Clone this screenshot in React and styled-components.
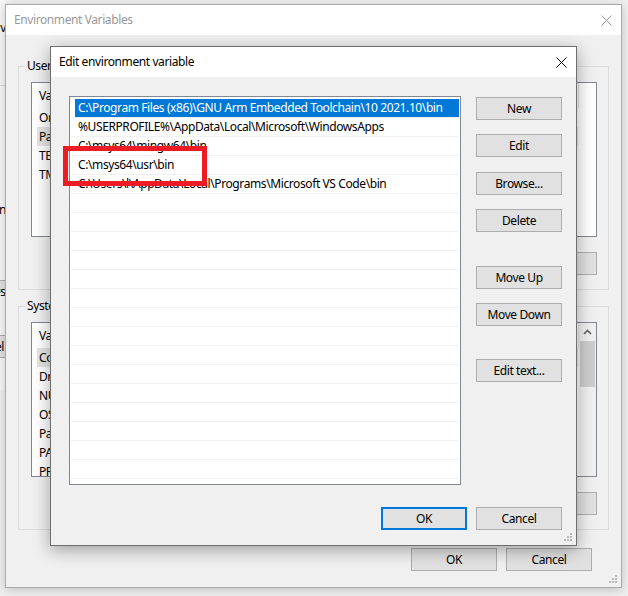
import styled, { createGlobalStyle } from "styled-components";

const GlobalStyle = createGlobalStyle`
  html, body {
    margin: 0;
    padding: 0;
  }
  body {
    background: #f0f0f0;
    font-family: "Segoe UI", "Noto Sans", "Liberation Sans", sans-serif;
    font-size: 12px;
    letter-spacing: -0.4px;
    color: #000;
  }
  * {
    box-sizing: border-box;
  }
`;

const Desktop = styled.div`
  position: relative;
  width: 628px;
  height: 596px;
  overflow: hidden;
  background: #f0f0f0;
`;

/* window peeking out on the far left */
const BackWindow = styled.div`
  position: absolute;
  left: -194px;
  top: -30px;
  width: 200px;
  height: 420px;
  background: #f7f7f7;
  display: flex;
  flex-direction: column;
  align-items: flex-end;
`;

const BackText = styled.div`
  margin-top: ${(p) => p.$top}px;
  line-height: 16px;
  white-space: nowrap;
`;

const BackRule = styled.div`
  align-self: stretch;
  height: 1px;
  background: #dcdcdc;
  margin-top: ${(p) => p.$top}px;
`;

const BackButton = styled.div`
  width: 120px;
  height: ${(p) => p.$h || 23}px;
  margin-top: ${(p) => p.$top}px;
  background: #e1e1e1;
  border: 1px solid #adadad;
  text-align: right;
  line-height: 21px;
  padding-right: 1px;
  white-space: nowrap;
`;

const Window = styled.div`
  position: absolute;
  left: ${(p) => p.$x}px;
  top: ${(p) => p.$y}px;
  width: ${(p) => p.$w}px;
  height: ${(p) => p.$h}px;
  background: #f0f0f0;
  border: 1px solid ${(p) => (p.$active ? "#6f6f6f" : "#aaaaaa")};
  box-shadow: ${(p) =>
    p.$active ? "0 4px 16px rgba(0, 0, 0, 0.34)" : "0 2px 10px rgba(0, 0, 0, 0.2)"};
  display: flex;
  flex-direction: column;
`;

const TitleBar = styled.div`
  height: 30px;
  flex-shrink: 0;
  background: #fff;
  display: flex;
  align-items: center;
  justify-content: space-between;
  padding-left: 8px;
  color: ${(p) => (p.$inactive ? "#999999" : "#000")};
`;

const TitleText = styled.span`
  font-size: 12px;
  line-height: 16px;
`;

const CloseBox = styled.div`
  width: 30px;
  height: 30px;
  display: flex;
  align-items: center;
  justify-content: center;
`;

const Grip = styled.svg`
  position: absolute;
  right: 3px;
  bottom: 3px;
`;

/* Environment Variables dialog */
const EnvBody = styled.div`
  display: flex;
  flex-direction: column;
  padding: 0 12px;
`;

const GroupBox = styled.fieldset`
  margin: ${(p) => p.$top}px 0 0;
  padding: 0;
  border: 1px solid #dcdcdc;
  min-width: 0;
`;

const Legend = styled.legend`
  margin-left: 6px;
  padding: 0 2px;
  line-height: 16px;
  font-size: 12px;
`;

const GroupInner = styled.div`
  padding: 8px 11px 14px 12px;
  display: flex;
  flex-direction: column;
`;

const ListView = styled.div`
  height: 155px;
  border: 1px solid #828790;
  background: #fff;
  display: grid;
  grid-template-columns: 1fr ${(p) => (p.$scroll ? "17px" : "0px")};
  overflow: hidden;
`;

const ListColumn = styled.div`
  display: flex;
  flex-direction: column;
  min-width: 0;
`;

const ListHeader = styled.div`
  width: 547px;
  height: 25px;
  flex-shrink: 0;
  display: grid;
  grid-template-columns: 170px 1fr;
  align-items: center;
  padding-left: 7px;
  border-right: 1px solid #e5e5e5;
`;

const ListRow = styled.div`
  width: 541px;
  height: 19px;
  flex-shrink: 0;
  margin-left: 5px;
  padding-left: 2px;
  display: grid;
  grid-template-columns: 163px 1fr;
  align-items: center;
  white-space: nowrap;
  overflow: hidden;
  background: ${(p) => (p.$selected ? "#e5e5e5" : "transparent")};
`;

const ScrollBar = styled.div`
  background: #f0f0f0;
  display: flex;
  flex-direction: column;
  align-items: center;
  justify-content: space-between;
`;

const ScrollArrow = styled.div`
  width: 17px;
  height: 17px;
  display: flex;
  align-items: center;
  justify-content: center;
`;

const ScrollThumb = styled.div`
  width: 15px;
  height: 46px;
  background: #cdcdcd;
  margin-top: 1px;
`;

const ScrollTrack = styled.div`
  flex: 1;
  display: flex;
  flex-direction: column;
  align-items: center;
`;

const ButtonRow = styled.div`
  display: flex;
  justify-content: flex-end;
  gap: ${(p) => p.$gap || 10}px;
  margin-top: ${(p) => p.$top || 0}px;
  padding-right: ${(p) => p.$right || 0}px;
`;

const Button = styled.button`
  width: 86px;
  height: 23px;
  flex-shrink: 0;
  margin: ${(p) => p.$gap || 0}px 0 0;
  padding: 0;
  background: #e1e1e1;
  border: ${(p) => (p.$default ? "2px solid #0078d7" : "1px solid #adadad")};
  font-family: inherit;
  font-size: 12px;
  letter-spacing: -0.4px;
  color: #000;
  line-height: 16px;
`;

/* Edit environment variable dialog */
const EditBody = styled.div`
  display: grid;
  grid-template-columns: 392px 86px;
  column-gap: 15px;
  padding: 19px 14px 0 18px;
`;

const PathList = styled.div`
  height: 389px;
  border: 1px solid #828790;
  background: #fff;
  padding: 2px 1px 1px;
  overflow: hidden;
  display: flex;
  flex-direction: column;
`;

const PathRow = styled.div`
  height: 19px;
  flex-shrink: 0;
  border-bottom: 1px solid #f0f0f0;
  display: flex;
`;

const PathText = styled.div`
  flex: 1;
  margin-left: 4px;
  padding-left: 3px;
  line-height: 18px;
  white-space: nowrap;
  overflow: hidden;
  background: ${(p) => (p.$selected ? "#0078d7" : "transparent")};
  color: ${(p) => (p.$selected ? "#fff" : "#000")};
`;

const ButtonColumn = styled.div`
  display: flex;
  flex-direction: column;
`;

const Highlight = styled.div`
  position: absolute;
  left: 12px;
  top: 99px;
  width: 144px;
  height: 40px;
  border: 5px solid #ed1c24;
`;

const CloseIcon = ({ color }) => (
  <svg width="11" height="11" viewBox="0 0 11 11">
    <path d="M0.5 0.5 L10.5 10.5 M10.5 0.5 L0.5 10.5" stroke={color} strokeWidth="1" fill="none" />
  </svg>
);

const GripIcon = () => (
  <Grip width="9" height="9" viewBox="0 0 9 9">
    {[
      [6, 0],
      [3, 3],
      [6, 3],
      [0, 6],
      [3, 6],
      [6, 6],
    ].map(([x, y]) => (
      <rect key={`${x}-${y}`} x={x} y={y} width="2" height="2" fill="#b8b8b8" />
    ))}
  </Grip>
);

const Chevron = ({ up }) => (
  <svg width="9" height="6" viewBox="0 0 9 6">
    <polyline
      points={up ? "1,5 4.5,1.5 8,5" : "1,1 4.5,4.5 8,1"}
      stroke="#606060"
      strokeWidth="1.6"
      fill="none"
    />
  </svg>
);

const userVars = [
  ["OneDrive", "C:\\Users\\l\\OneDrive"],
  ["Path", "C:\\Program Files (x86)\\GNU Arm Embedded Toolchain\\10 2021"],
  ["TEMP", "C:\\Users\\l\\AppData\\Local\\Temp"],
  ["TMP", "C:\\Users\\l\\AppData\\Local\\Temp"],
];

const systemVars = [
  ["ComSpec", "C:\\Windows\\system32\\cmd.exe"],
  ["DriverData", "C:\\Windows\\System32\\Drivers\\DriverData"],
  ["NUMBER_OF_PROCESSORS", "8"],
  ["OS", "Windows_NT"],
  ["Path", "C:\\Windows\\system32;C:\\Windows;..."],
  ["PATHEXT", ".COM;.EXE;.BAT;.CMD;.VBS;.VBE;.JS;.JSE;.WSF"],
  ["PROCESSOR_ARCHITECTURE", "AMD64"],
  ["PROCESSOR_IDENTIFIER", "Intel64 Family 6"],
];

const paths = [
  "C:\\Program Files (x86)\\GNU Arm Embedded Toolchain\\10 2021.10\\bin",
  "%USERPROFILE%\\AppData\\Local\\Microsoft\\WindowsApps",
  "C:\\msys64\\mingw64\\bin",
  "C:\\msys64\\usr\\bin",
  "C:\\Users\\l\\AppData\\Local\\Programs\\Microsoft VS Code\\bin",
];

const editButtons = [
  ["New", 1],
  ["Edit", 14],
  ["Browse...", 15],
  ["Delete", 14],
  ["Move Up", 34],
  ["Move Down", 14],
  ["Edit text...", 33],
];

function VarList({ rows, selected, scroll }) {
  return (
    <ListView $scroll={scroll}>
      <ListColumn>
        <ListHeader>
          <span>Variable</span>
          <span>Value</span>
        </ListHeader>
        {rows.map(([name, value], idx) => (
          <ListRow key={name + idx} $selected={idx === selected}>
            <span>{name}</span>
            <span>{value}</span>
          </ListRow>
        ))}
      </ListColumn>
      {scroll && (
        <ScrollBar>
          <ScrollTrack>
            <ScrollArrow>
              <Chevron up />
            </ScrollArrow>
            <ScrollThumb />
          </ScrollTrack>
          <ScrollArrow>
            <Chevron />
          </ScrollArrow>
        </ScrollBar>
      )}
    </ListView>
  );
}

export default function App() {
  const rows = Array.from({ length: 21 }, (_, i) => paths[i] || "");

  return (
    <>
      <GlobalStyle />
      <Desktop>
        <BackWindow>
          <BackText $top={50}>and virtual memory v</BackText>
          <BackRule $top={49} />
          <BackText $top={116}>Startup and Recovery n</BackText>
          <BackButton $top={62} $h={10}>Environment Variables...</BackButton>
          <BackButton $top={45} $h={23}>Cancel</BackButton>
        </BackWindow>

        <Window $x={5} $y={4} $w={617} $h={584}>
          <TitleBar $inactive>
            <TitleText>Environment Variables</TitleText>
            <CloseBox>
              <CloseIcon color="#999999" />
            </CloseBox>
          </TitleBar>
          <EnvBody>
            <GroupBox $top={23}>
              <Legend>User variables for l</Legend>
              <GroupInner>
                <VarList rows={userVars} selected={1} />
                <ButtonRow $top={15}>
                  <Button>New...</Button>
                  <Button>Edit...</Button>
                  <Button>Delete</Button>
                </ButtonRow>
              </GroupInner>
            </GroupBox>
            <GroupBox $top={8}>
              <Legend>System variables</Legend>
              <GroupInner>
                <VarList rows={systemVars} selected={0} scroll />
                <ButtonRow $top={15}>
                  <Button>New...</Button>
                  <Button>Edit...</Button>
                  <Button>Delete</Button>
                </ButtonRow>
              </GroupInner>
            </GroupBox>
            <ButtonRow $top={18} $gap={9} $right={17}>
              <Button>OK</Button>
              <Button>Cancel</Button>
            </ButtonRow>
          </EnvBody>
          <GripIcon />
        </Window>

        <Window $x={50} $y={46} $w={527} $h={500} $active>
          <TitleBar>
            <TitleText>Edit environment variable</TitleText>
            <CloseBox>
              <CloseIcon color="#000" />
            </CloseBox>
          </TitleBar>
          <EditBody>
            <PathList>
              {rows.map((p, idx) => (
                <PathRow key={idx}>
                  <PathText $selected={idx === 0}>{p}</PathText>
                </PathRow>
              ))}
            </PathList>
            <ButtonColumn>
              {editButtons.map(([label, gap]) => (
                <Button key={label} $gap={gap}>
                  {label}
                </Button>
              ))}
            </ButtonColumn>
          </EditBody>
          <ButtonRow $top={22} $gap={9} $right={14}>
            <Button $default>OK</Button>
            <Button>Cancel</Button>
          </ButtonRow>
          <Highlight />
          <GripIcon />
        </Window>
      </Desktop>
    </>
  );
}
